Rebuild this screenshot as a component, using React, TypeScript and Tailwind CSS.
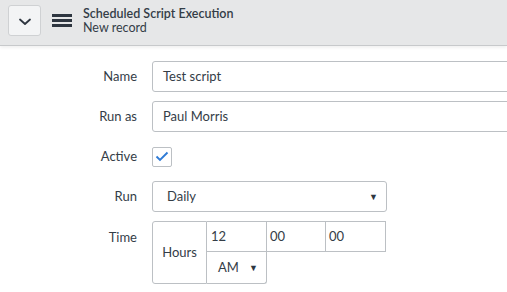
import React from "react";

const font = { fontFamily: "Lato, 'Open Sans', sans-serif" };

function Label({ children, top }: { children: React.ReactNode; top?: boolean }) {
  return (
    <div className={`flex justify-end pr-[15px] text-[13px] text-[#343d47] ${top ? "items-start pt-[7px]" : "items-center"} h-full`}>
      {children}
    </div>
  );
}

export default function App() {
  return (
    <div className="w-[507px] h-[292px] overflow-hidden bg-white" style={font}>
      <div className="h-[46px] bg-[#e6e7e8] border-b border-[#c7c9cb] flex items-center shadow-[0_2px_3px_rgba(0,0,0,0.06)]">
        <div className="ml-[8px] mt-[-4px] w-[33px] h-[31px] rounded-[3px] border border-[#cfd1d3] bg-[#f3f4f5] flex items-center justify-center">
          <svg width="14" height="8" viewBox="0 0 14 8" fill="none" className="mt-[2px]">
            <path d="M2 1.5 L7 6 L12 1.5" stroke="#2e3640" strokeWidth="1.8" strokeLinecap="round" strokeLinejoin="round" />
          </svg>
        </div>
        <div className="ml-[11px] mt-[-5px] w-[20px] flex flex-col gap-[2px]">
          <div className="h-[3px] bg-[#2e3640]" />
          <div className="h-[3px] bg-[#2e3640]" />
          <div className="h-[3px] bg-[#2e3640]" />
        </div>
        <div className="ml-[11px] mt-[-3px] flex flex-col leading-[14px] text-[#343d47]">
          <span className="text-[12.5px] font-semibold">Scheduled Script Execution</span>
          <span className="text-[12.5px]">New record</span>
        </div>
      </div>
      <div className="grid grid-cols-[152px_1fr] auto-rows-[31px] gap-y-[9px] pt-[15px]">
        <Label>Name</Label>
        <div className="w-[380px] h-[31px] border border-[#bcc0c4] rounded-[3px] flex items-center pl-[10px] text-[13px] text-[#343d47]">Test script</div>
        <Label>Run as</Label>
        <div className="w-[380px] h-[31px] border border-[#bcc0c4] rounded-[3px] flex items-center pl-[10px] text-[13px] text-[#343d47]">Paul Morris</div>
        <Label>Active</Label>
        <div className="flex items-center">
          <div className="w-[20px] h-[20px] border border-[#bcc0c4] rounded-[2px] flex items-center justify-center">
            <svg width="14" height="11" viewBox="0 0 14 11" fill="none">
              <path d="M1.5 5.5 L5 9 L12.5 1.5" stroke="#2f7bd6" strokeWidth="1.9" />
            </svg>
          </div>
        </div>
        <Label>Run</Label>
        <div className="w-[235px] h-[31px] border border-[#bcc0c4] rounded-[3px] flex items-center justify-between pl-[14px] pr-[8px] text-[13px] text-[#343d47]">
          <span>Daily</span>
          <span className="text-[9px] text-[#2e3640]">▼</span>
        </div>
        <Label top>Time</Label>
        <div className="w-[234px] h-[63px] grid grid-cols-[55px_60px_59px_60px] grid-rows-[31px_32px] text-[13px] text-[#343d47]">
          <div className="row-span-2 border border-[#bcc0c4] rounded-l-[3px] flex items-center justify-center">Hours</div>
          <div className="border-t border-r border-b border-[#bcc0c4] flex items-center pl-[4px]">12</div>
          <div className="border-t border-r border-b border-[#bcc0c4] flex items-center pl-[3px]">00</div>
          <div className="border-t border-r border-b border-[#bcc0c4] flex items-center pl-[3px]">00</div>
          <div className="border-r border-b border-[#bcc0c4] rounded-br-[3px] flex items-center justify-between pl-[11px] pr-[8px]">
            <span>AM</span>
            <span className="text-[9px] text-[#2e3640]">▼</span>
          </div>
        </div>
      </div>
    </div>
  );
}
